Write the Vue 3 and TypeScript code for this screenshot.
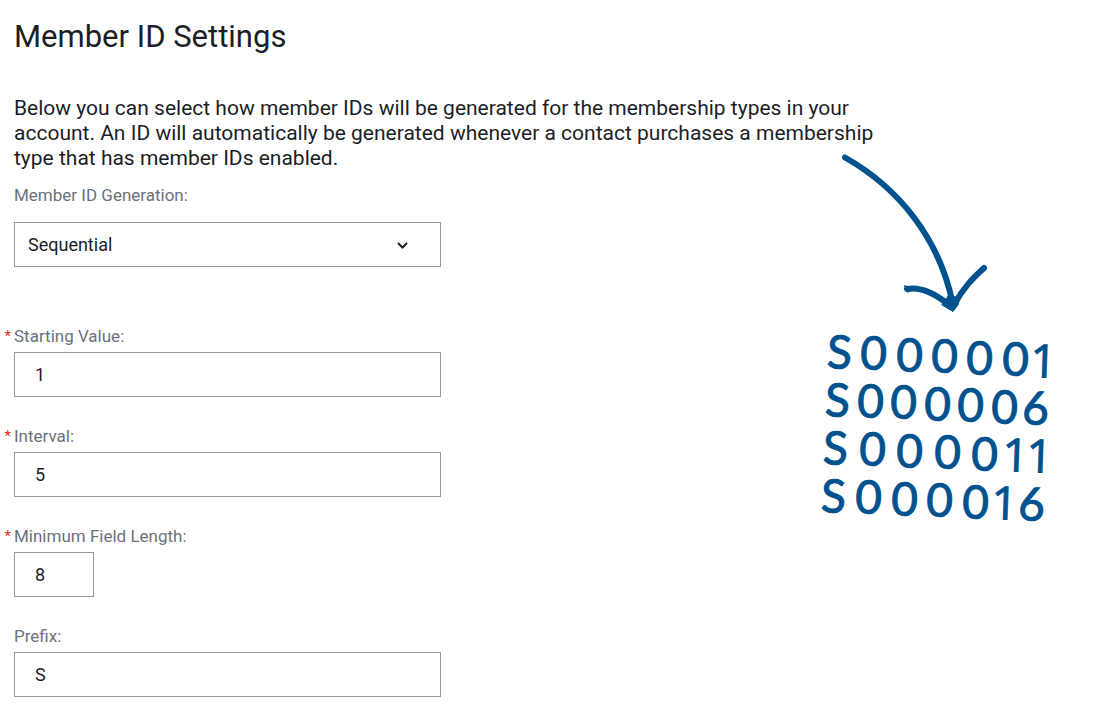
<script setup lang="ts">
import { reactive } from 'vue'

interface Field {
  id: 'start' | 'interval' | 'length' | 'prefix'
  label: string
  required: boolean
  short?: boolean
}

interface SampleRow {
  text: string
  x: number[]
  y: number[]
}

const fields: Field[] = [
  { id: 'start', label: 'Starting Value:', required: true },
  { id: 'interval', label: 'Interval:', required: true },
  { id: 'length', label: 'Minimum Field Length:', required: true, short: true },
  { id: 'prefix', label: 'Prefix:', required: false },
]

const values = reactive({
  generation: 'Sequential',
  start: '1',
  interval: '5',
  length: '8',
  prefix: 'S',
})

// Hand-lettered sample IDs: each character has its own place on the sketch.
const samples: SampleRow[] = [
  { text: 'S000001', x: [29, 63, 99, 134, 169, 205, 233], y: [218, 219, 221, 222, 224, 225, 227] },
  { text: 'S000006', x: [27, 60, 93, 127, 160, 194, 225], y: [266, 267, 268, 270, 271, 273, 274] },
  { text: 'S000011', x: [25, 62, 99, 137, 174, 205, 229], y: [314, 315, 317, 318, 320, 321, 322] },
  { text: 'S000016', x: [23, 58, 94, 129, 165, 194, 221], y: [362, 363, 365, 366, 368, 369, 370] },
]
</script>

<template>
  <main class="page">
    <h1>Member ID Settings</h1>
    <p class="intro">
      Below you can select how member IDs will be generated for the membership types in your
      <br />account. An ID will automatically be generated whenever a contact purchases a membership
      <br />type that has member IDs enabled.
    </p>

    <form class="form" @submit.prevent>
      <div class="field generation">
        <label for="generation">Member ID Generation:</label>
        <div class="select-wrap">
          <select id="generation" v-model="values.generation">
            <option>Sequential</option>
          </select>
          <svg class="chevron" viewBox="0 0 12 8" aria-hidden="true">
            <path d="M1 1 5.5 5.5 10 1" />
          </svg>
        </div>
      </div>

      <div v-for="f in fields" :key="f.id" class="field">
        <label :for="f.id"><span v-if="f.required" class="star">*</span>{{ f.label }}</label>
        <input :id="f.id" v-model="values[f.id]" type="text" :class="{ short: f.short }" :required="f.required" />
      </div>
    </form>

    <svg class="sketch" viewBox="0 0 280 400" role="img" aria-label="Sample member IDs">
      <g class="arrow">
        <path d="M35 7.500C89 38 130 89 143 155" />
        <path d="M174 118C163 128 153 138 144 155" />
        <path d="M97 139C113 136 128 146 142 157" />
        <path class="tip" d="M94.500 136 98 142.500 102 138Z" />
        <path class="tip" d="M140 144 145 147 150 146 148 155 143 161.500 132 155Z" />
      </g>
      <text v-for="row in samples" :key="row.text"><tspan
        v-for="(ch, i) in row.text"
        :key="i"
        :x="row.x[i]"
        :y="row.y[i]"
        :class="{ one: ch === '1' }"
        rotate="2"
      >{{ ch }}</tspan></text>
    </svg>
  </main>
</template>

<style>
body {
  margin: 0;
  background: #fff;
}
</style>

<style scoped>
.page {
  position: relative;
  box-sizing: border-box;
  padding: 17px 14px 28px;
  color: #1c1e26;
  font-family: Roboto, "Liberation Sans", sans-serif;
}

h1 {
  margin: 0;
  font-size: 31px;
  font-weight: 400;
  line-height: 40px;
}

.intro {
  margin: 39px 0 0;
  font-size: 21px;
  line-height: 25px;
}

.form {
  max-width: 427px;
  margin-top: 12px;
}

.field {
  display: flex;
  flex-direction: column;
  align-items: flex-start;
  gap: 4px;
  margin-bottom: 27px;
}

.generation {
  gap: 15px;
  margin-bottom: 57px;
}

label {
  position: relative;
  color: #6b717b;
  font-size: 17px;
  line-height: 24px;
}

.star {
  position: absolute;
  right: 100%;
  margin-right: 3px;
  color: #e0300a;
  font-size: 15px;
}

.select-wrap {
  position: relative;
  width: 100%;
}

select,
input {
  display: block;
  box-sizing: border-box;
  width: 100%;
  height: 45px;
  margin: 0;
  border: 1px solid #979aa2;
  border-radius: 0;
  background: #fff;
  color: #1c1e26;
  font-family: inherit;
  font-size: 18px;
  outline: none;
}

select {
  appearance: none;
  padding: 0 48px 0 13px;
}

input {
  padding: 0 20px;
}

.short {
  width: 80px;
}

.chevron {
  position: absolute;
  top: 20px;
  right: 32px;
  width: 12px;
  height: 8px;
  fill: none;
  stroke: #1c1e26;
  stroke-width: 2;
  pointer-events: none;
}

.sketch {
  position: absolute;
  top: 150px;
  left: 810px;
  width: 280px;
  height: 400px;
  pointer-events: none;
}

.arrow {
  fill: none;
  stroke: #00528f;
  stroke-width: 6;
  stroke-linecap: round;
}

.arrow .tip {
  fill: #00528f;
  stroke-width: 1;
}

.sketch text {
  fill: #00528f;
  stroke: #00528f;
  stroke-width: 1;
  font-family: Lato, sans-serif;
  font-size: 46px;
  line-height: 1;
  text-anchor: middle;
}

.sketch .one {
  font-family: "Open Sans", "Noto Sans", sans-serif;
}
</style>
